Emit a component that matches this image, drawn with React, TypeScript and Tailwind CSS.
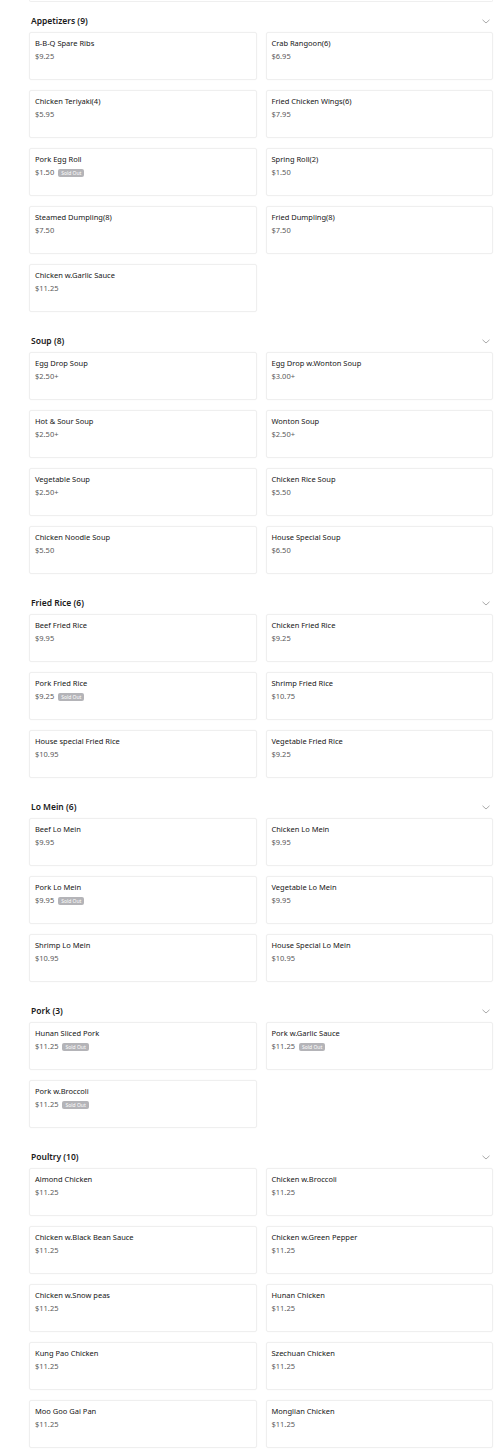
import React from "react";

type Item = { name: string; price: string; soldOut?: boolean };
type Section = { title: string; items: Item[] };

const MENU: Section[] = [
  {
    title: "Appetizers",
    items: [
      { name: "B-B-Q Spare Ribs", price: "$9.25" },
      { name: "Crab Rangoon(6)", price: "$6.95" },
      { name: "Chicken Teriyaki(4)", price: "$5.95" },
      { name: "Fried Chicken Wings(6)", price: "$7.95" },
      { name: "Pork Egg Roll", price: "$1.50", soldOut: true },
      { name: "Spring Roll(2)", price: "$1.50" },
      { name: "Steamed Dumpling(8)", price: "$7.50" },
      { name: "Fried Dumpling(8)", price: "$7.50" },
      { name: "Chicken w.Garlic Sauce", price: "$11.25" },
    ],
  },
  {
    title: "Soup",
    items: [
      { name: "Egg Drop Soup", price: "$2.50+" },
      { name: "Egg Drop w.Wonton Soup", price: "$3.00+" },
      { name: "Hot & Sour Soup", price: "$2.50+" },
      { name: "Wonton Soup", price: "$2.50+" },
      { name: "Vegetable Soup", price: "$2.50+" },
      { name: "Chicken Rice Soup", price: "$5.50" },
      { name: "Chicken Noodle Soup", price: "$5.50" },
      { name: "House Special Soup", price: "$6.50" },
    ],
  },
  {
    title: "Fried Rice",
    items: [
      { name: "Beef Fried Rice", price: "$9.95" },
      { name: "Chicken Fried Rice", price: "$9.25" },
      { name: "Pork Fried Rice", price: "$9.25", soldOut: true },
      { name: "Shrimp Fried Rice", price: "$10.75" },
      { name: "House special Fried Rice", price: "$10.95" },
      { name: "Vegetable Fried Rice", price: "$9.25" },
    ],
  },
  {
    title: "Lo Mein",
    items: [
      { name: "Beef Lo Mein", price: "$9.95" },
      { name: "Chicken Lo Mein", price: "$9.95" },
      { name: "Pork Lo Mein", price: "$9.95", soldOut: true },
      { name: "Vegetable Lo Mein", price: "$9.95" },
      { name: "Shrimp Lo Mein", price: "$10.95" },
      { name: "House Special Lo Mein", price: "$10.95" },
    ],
  },
  {
    title: "Pork",
    items: [
      { name: "Hunan Sliced Pork", price: "$11.25", soldOut: true },
      { name: "Pork w.Garlic Sauce", price: "$11.25", soldOut: true },
      { name: "Pork w.Broccoli", price: "$11.25", soldOut: true },
    ],
  },
  {
    title: "Poultry",
    items: [
      { name: "Almond Chicken", price: "$11.25" },
      { name: "Chicken w.Broccoli", price: "$11.25" },
      { name: "Chicken w.Black Bean Sauce", price: "$11.25" },
      { name: "Chicken w.Green Pepper", price: "$11.25" },
      { name: "Chicken w.Snow peas", price: "$11.25" },
      { name: "Hunan Chicken", price: "$11.25" },
      { name: "Kung Pao Chicken", price: "$11.25" },
      { name: "Szechuan Chicken", price: "$11.25" },
      { name: "Moo Goo Gai Pan", price: "$11.25" },
      { name: "Monglian Chicken", price: "$11.25" },
    ],
  },
];

function Chevron() {
  return (
    <svg width="8" height="5" viewBox="0 0 8 5" fill="none" className="text-[#a0a0a0]">
      <polyline points="0.5,0.8 4,4 7.5,0.8" stroke="currentColor" strokeWidth="0.9" />
    </svg>
  );
}

function ItemCard({ item }: { item: Item }) {
  return (
    <div className="h-[48px] rounded-[2px] border border-[#efefef] bg-white px-[5px] pt-[5px] shadow-[0_0_2px_rgba(0,0,0,0.03)]">
      <p className="text-[7.5px] leading-[11px] text-[#151515]">{item.name}</p>
      <div className="mt-[2px] flex items-center gap-[4px]">
        <span className="text-[7.5px] leading-[11px] text-[#5a5a5a]">{item.price}</span>
        {item.soldOut && (
          <span className="rounded-[2px] bg-[#b4b4b8] px-[3px] text-[5px] leading-[8px] text-white">Sold Out</span>
        )}
      </div>
    </div>
  );
}

export default function App() {
  return (
    <div className="min-h-[1449px] bg-white pl-[29px] pr-[7px] font-['Noto_Sans',sans-serif]">
      <div className="h-[2px] rounded-b-[2px] border-x border-b border-[#efefef]" />
      <div className="pt-[12px]">
        {MENU.map((section, i) => (
          <section key={section.title} className={i === 0 ? "" : "mt-[22px]"}>
            <div className="mb-[4px] flex h-[14px] items-center justify-between pl-[2px] pr-[3px]">
              <h2 className="text-[8.5px] font-semibold text-[#1a1a1a]">
                {section.title} ({section.items.length})
              </h2>
              <Chevron />
            </div>
            <div className="grid grid-cols-2 gap-x-[9px] gap-y-[10px]">
              {section.items.map((item) => (
                <ItemCard key={item.name} item={item} />
              ))}
            </div>
          </section>
        ))}
      </div>
    </div>
  );
}
